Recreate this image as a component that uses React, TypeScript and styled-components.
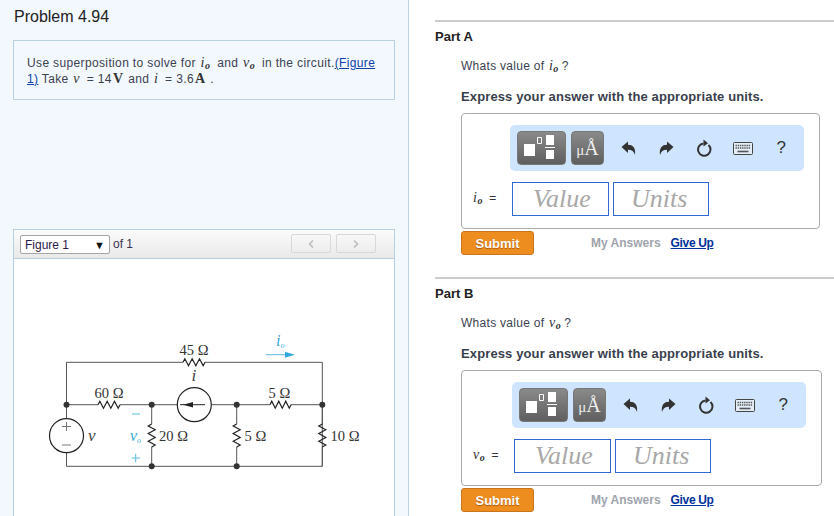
import React from "react";
import styled, { createGlobalStyle } from "styled-components";
import { ChevronLeft, ChevronRight } from "lucide-react";

const GlobalStyle = createGlobalStyle`
  html, body {
    margin: 0;
    padding: 0;
    background: #fff;
    overflow: hidden;
  }
  * {
    box-sizing: border-box;
  }
`;

const Page = styled.div`
  width: 834px;
  height: 516px;
  display: flex;
  overflow: hidden;
  font-family: "Liberation Sans", Arial, sans-serif;
  color: #333;
`;

const LeftPanel = styled.section`
  width: 409px;
  height: 516px;
  padding: 0 13px;
  background: #f3f8fe;
  border-right: 1px solid #b9cfe2;
  display: flex;
  flex-direction: column;
`;

const Title = styled.h1`
  margin: 7px 0 0;
  height: 33px;
  padding-left: 1px;
  font-size: 16px;
  line-height: 19px;
  font-weight: normal;
  color: #222;
`;

const ProblemText = styled.div`
  width: 382px;
  height: 60px;
  padding: 14px 13px 0;
  border: 1px solid #b9cfe2;
  font-size: 12px;
  line-height: 16px;
  letter-spacing: 0.36px;
  color: #3c4250;

  a {
    color: #0b3ea8;
    text-decoration: underline;
  }
`;

const MathVar = styled.span<{ $upright?: boolean }>`
  margin: ${(props) => (props.$upright ? "0 1px" : "0 3px 0 1px")};
  font-family: "Liberation Serif", "Times New Roman", serif;
  font-style: ${(props) => (props.$upright ? "normal" : "italic")};
  font-weight: ${(props) => (props.$upright ? "bold" : "normal")};
  font-size: 14px;
  line-height: 14px;
  letter-spacing: 0.5px;
  color: #333;

  sub {
    font-size: 10px;
    font-weight: bold;
    line-height: 0;
    vertical-align: -2px;
  }
`;

const FigureBox = styled.div`
  width: 382px;
  flex: 1;
  margin-top: 129px;
  background: #fff;
  border: 1px solid #b9cfe2;
  border-bottom: 0;
  overflow: hidden;
`;

const FigureBar = styled.div`
  height: 29px;
  padding: 5px 18px 0 6px;
  display: flex;
  align-items: flex-start;
  background: linear-gradient(#fbfbfb, #e9e9e9);
  border-bottom: 1px solid #b9cfe2;
  font-size: 12px;
  color: #3a3350;
`;

const FigureSelect = styled.div`
  width: 90px;
  height: 19px;
  padding: 0 4px;
  display: flex;
  align-items: center;
  justify-content: space-between;
  background: #fff;
  border: 1px solid #a5a5a5;
  border-radius: 2px;
  color: #2a1a4a;

  i {
    font-style: normal;
    font-size: 11px;
    color: #111;
  }
`;

const OfCount = styled.span`
  margin-left: 3px;
  line-height: 19px;
`;

const PagerButton = styled.div<{ $first?: boolean }>`
  width: 40px;
  height: 19px;
  margin-left: ${(props) => (props.$first ? "auto" : "5px")};
  margin-top: -1px;
  display: flex;
  align-items: center;
  justify-content: center;
  border: 1px solid #d8d8d8;
  border-radius: 2px;
  color: #bdbdbd;
`;

const CircuitSvg = styled.svg`
  display: block;
`;

const RightPanel = styled.section`
  width: 425px;
  padding: 20px 0 0 26px;
`;

const PartBlock = styled.div`
  height: 257px;
  border-top: 2px solid #ccc;
`;

const PartTitle = styled.h2`
  margin: 7px 0 0;
  font-size: 13px;
  line-height: 15px;
  font-weight: bold;
  color: #222;
`;

const PartBody = styled.div`
  padding-left: 26px;
`;

const Question = styled.div`
  margin-top: 13px;
  height: 18px;
  font-size: 12px;
  line-height: 18px;
  letter-spacing: 0.28px;
  color: #3c4250;
`;

const Instruction = styled.div`
  margin-top: 14px;
  height: 16px;
  font-size: 13px;
  line-height: 16px;
  letter-spacing: 0.12px;
  font-weight: bold;
  color: #3a3f4d;
`;

const AnswerBox = styled.div<{ $shift: number }>`
  width: ${(props) => 359 + props.$shift}px;
  height: 116px;
  margin-top: 8px;
  padding: 11px 0 0 10px;
  border: 1px solid #aaa;
  border-radius: 4px;
  background: #fff;
`;

const Toolbar = styled.div<{ $shift: number }>`
  width: 294px;
  height: 46px;
  margin-left: ${(props) => 38 + props.$shift}px;
  padding: 6px 0 0 7px;
  display: flex;
  align-items: flex-start;
  background: #cfe5ff;
  border-radius: 5px;
`;

const TemplateButton = styled.div<{ $wide?: boolean }>`
  width: ${(props) => (props.$wide ? "49px" : "33px")};
  height: 34px;
  margin-right: 5px;
  display: flex;
  align-items: baseline;
  justify-content: center;
  background: linear-gradient(#8a8a8a, #5f5f5f);
  border: 1px solid #777;
  border-radius: 4px;
  color: #eee;
  font-family: "Liberation Serif", serif;
  font-size: 15px;
  line-height: 33px;

  span {
    font-size: 20px;
  }
`;

const ToolIcon = styled.div`
  width: 38.3px;
  height: 34px;
  display: flex;
  align-items: center;
  justify-content: center;
  color: #333;
  font-size: 17px;
`;

const EntryRow = styled.div`
  margin-top: 11px;
  display: flex;
  gap: 4px;
`;

const EntryLabel = styled.span<{ $shift: number }>`
  width: ${(props) => 36 + props.$shift}px;
  padding-top: 8px;
  font-size: 12px;
  line-height: 17px;
  color: #333;
  white-space: nowrap;
`;

const EntryField = styled.div<{ $narrow?: boolean }>`
  width: ${(props) => (props.$narrow ? "96px" : "97px")};
  height: 34px;
  padding-left: ${(props) => (props.$narrow ? "17px" : "20px")};
  border: 1px solid #2f68d0;
  background: #fff;
  font-family: "Liberation Serif", "Times New Roman", serif;
  font-style: italic;
  font-size: 26px;
  line-height: 31px;
  color: #a8a8a8;
`;

const ActionRow = styled.div`
  margin-top: 2px;
  display: flex;
  align-items: center;
`;

const SubmitButton = styled.button`
  width: 73px;
  height: 24px;
  padding: 0;
  background: #ee8d1f;
  border: 1px solid #c9751c;
  border-radius: 3px;
  color: #fff;
  font-family: "Liberation Sans", Arial, sans-serif;
  font-size: 13px;
  font-weight: bold;
  text-shadow: 0 1px 1px #a55a10;
`;

const MyAnswers = styled.span`
  margin-left: 57px;
  font-size: 12px;
  font-weight: bold;
  color: #a0a4ad;
`;

const GiveUp = styled.a`
  margin-left: 10px;
  font-size: 12px;
  letter-spacing: -0.35px;
  font-weight: bold;
  color: #00309a;
  text-decoration: underline;
`;

// zigzag between two points, along x or y
function zigzag(x: number, y: number, length: number, vertical: boolean) {
  const steps = 6;
  const step = length / steps;
  let d = `M${x} ${y}`;
  for (let n = 0; n < steps; n++) {
    const along = (n + 0.5) * step;
    const side = n % 2 === 0 ? -3.5 : 3.5;
    d += vertical ? ` L${x + side} ${y + along}` : ` L${x + along} ${y + side}`;
  }
  d += vertical ? ` L${x} ${y + length}` : ` L${x + length} ${y}`;
  return d;
}

function Circuit() {
  const wire = "#555";
  const blue = "#35a9dc";
  const label = { fontFamily: '"Liberation Serif", serif', fontSize: 14.5, fill: "#333" };
  const nodes = [
    [66.5, 404.7],
    [151.7, 404.7],
    [236.7, 404.7],
    [322.3, 404.7],
    [151.7, 466.3],
    [236.7, 466.3],
  ];
  return (
    <CircuitSvg width={380} height={257} viewBox="14 259 380 257">
      <g fill="none" stroke={wire} strokeWidth={1}>
        <path d="M183 362.3 H66.5 V418.5 M66.5 453 V466.3 H322.3 V362.3 H205" />
        <path d="M66.5 404.7 H98 M120 404.7 H177 M211.5 404.7 H270 M291 404.7 H322.3" />
        <path d="M151.7 404.7 V424 M151.7 447 V466.3 M236.7 404.7 V424 M236.7 447 V466.3 M322.3 404.7 V424 M322.3 447 V466.3" />
      </g>
      <g fill="none" stroke="#222" strokeWidth={1.2}>
        <path d={zigzag(183, 362.3, 22, false)} />
        <path d={zigzag(98, 404.7, 22, false)} />
        <path d={zigzag(270, 404.7, 21, false)} />
        <path d={zigzag(151.7, 424, 23, true)} />
        <path d={zigzag(236.7, 424, 23, true)} />
        <path d={zigzag(322.3, 424, 23, true)} />
        <circle cx={66.5} cy={435.7} r={17} />
        <circle cx={194.3} cy={404.7} r={17} />
        <path d="M180 404.7 H205" strokeWidth={1} />
      </g>
      <path d="M183 404.7 L193 402 V407.4 Z" fill="#222" />
      {nodes.map(([cx, cy]) => (
        <circle key={`${cx}-${cy}`} cx={cx} cy={cy} r={3} fill="#333" />
      ))}
      <g stroke="#555" strokeWidth={0.8}>
        <path d="M62 426.5 H71 M66.5 422 V431 M62 445 H71" />
      </g>
      <g stroke={blue} strokeWidth={1} opacity={0.8}>
        <path d="M132 414 H140 M131.5 458 H140 M135.7 453.7 V462.3" />
        <path d="M266 354.7 H288" />
      </g>
      <path d="M285 351.7 L295 354.7 L285 357.7 Z" fill={blue} />
      <text x={179.5} y={355} {...label}>45 Ω</text>
      <text x={94.5} y={397.5} {...label}>60 Ω</text>
      <text x={268.5} y={397.5} {...label}>5 Ω</text>
      <text x={159} y={441} {...label}>20 Ω</text>
      <text x={244.5} y={441} {...label}>5 Ω</text>
      <text x={330.5} y={441} {...label}>10 Ω</text>
      <text x={88} y={441} {...label} fontSize={17} fontStyle="italic" fill="#444">v</text>
      <text x={191.5} y={381} {...label} fontSize={17} fontStyle="italic" fill="#444">i</text>
      <text x={130} y={441} {...label} fontSize={16} fontStyle="italic" fill={blue}>
        v<tspan fontSize={8} dy={2}>o</tspan>
      </text>
      <text x={276} y={346} {...label} fontSize={16} fontStyle="italic" fill={blue}>
        i<tspan fontSize={8} dy={2}>o</tspan>
      </text>
    </CircuitSvg>
  );
}

function TemplateIcon() {
  return (
    <svg width={47} height={32} viewBox="1 1 47 32">
      <path d="M7 13 H18 V25 H7 Z M29 4 H37 V14 H29 Z M29 19 H37 V28 H29 Z M28 16 H38 V17 H28 Z" fill="#fff" />
      <path d="M20.5 6.5 H24.5 V12.5 H20.5 Z" fill="none" stroke="#fff" strokeWidth={1} />
    </svg>
  );
}

function UndoIcon({ flip }: { flip?: boolean }) {
  return (
    <svg width={15} height={15} viewBox="0 0 15 15" style={flip ? { transform: "scaleX(-1)" } : undefined}>
      <path d="M0.5 6 L7 0.5 V3.8 C12 3.8 15 7 14 14 C13 10.5 11 8.8 7 8.8 V12 Z" fill="#333" />
    </svg>
  );
}

function ResetIcon() {
  return (
    <svg width={17} height={18} viewBox="0 0 17 18">
      <path d="M12.5 6 A6.2 6.2 0 1 1 7.5 4.4" fill="none" stroke="#333" strokeWidth={2} />
      <path d="M7.5 0.5 L12 4.2 L7.5 7.5 Z" fill="#333" />
    </svg>
  );
}

function KeyboardIcon() {
  return (
    <svg width={20} height={13} viewBox="0 0 20 13">
      <rect x={0.5} y={0.5} width={19} height={12} rx={1} fill="#e4eef8" stroke="#444" />
      <path d="M2.5 3.5 H17.5 M2.5 6 H17.5" stroke="#555" strokeWidth={1.4} strokeDasharray="1.4 0.8" />
      <path d="M4.5 9.5 H15.5" stroke="#555" strokeWidth={1.6} />
    </svg>
  );
}

function PartSection({ name, symbol, shift }: { name: string; symbol: string; shift: number }) {
  return (
    <PartBlock>
      <PartTitle>Part {name}</PartTitle>
      <PartBody>
        <Question>
          Whats value of <MathVar>{symbol}<sub>o</sub></MathVar>?
        </Question>
        <Instruction>Express your answer with the appropriate units.</Instruction>
        <AnswerBox $shift={shift}>
          <Toolbar $shift={shift}>
            <TemplateButton $wide>
              <TemplateIcon />
            </TemplateButton>
            <TemplateButton>μ<span>Å</span></TemplateButton>
            <ToolIcon><UndoIcon /></ToolIcon>
            <ToolIcon><UndoIcon flip /></ToolIcon>
            <ToolIcon><ResetIcon /></ToolIcon>
            <ToolIcon><KeyboardIcon /></ToolIcon>
            <ToolIcon>?</ToolIcon>
          </Toolbar>
          <EntryRow>
            <EntryLabel $shift={shift}>
              <MathVar>{symbol}<sub>o</sub></MathVar> =
            </EntryLabel>
            <EntryField>Value</EntryField>
            <EntryField $narrow>Units</EntryField>
          </EntryRow>
        </AnswerBox>
        <ActionRow>
          <SubmitButton>Submit</SubmitButton>
          <MyAnswers>My Answers</MyAnswers>
          <GiveUp href="#">Give Up</GiveUp>
        </ActionRow>
      </PartBody>
    </PartBlock>
  );
}

export default function App() {
  return (
    <Page>
      <GlobalStyle />
      <LeftPanel>
        <Title>Problem 4.94</Title>
        <ProblemText>
          Use superposition to solve for <MathVar>i<sub>o</sub></MathVar> and <MathVar>v<sub>o</sub></MathVar> in the circuit.
          <a href="#">(Figure 1)</a> Take <MathVar>v</MathVar> = 14<MathVar $upright>V</MathVar> and <MathVar>i</MathVar> = 3.6<MathVar $upright>A</MathVar> .
        </ProblemText>
        <FigureBox>
          <FigureBar>
            <FigureSelect>
              Figure 1<i>▼</i>
            </FigureSelect>
            <OfCount>of 1</OfCount>
            <PagerButton $first>
              <ChevronLeft size={12} strokeWidth={3.5} />
            </PagerButton>
            <PagerButton>
              <ChevronRight size={12} strokeWidth={3.5} />
            </PagerButton>
          </FigureBar>
          <Circuit />
        </FigureBox>
      </LeftPanel>
      <RightPanel>
        <PartSection name="A" symbol="i" shift={0} />
        <PartSection name="B" symbol="v" shift={2} />
      </RightPanel>
    </Page>
  );
}
